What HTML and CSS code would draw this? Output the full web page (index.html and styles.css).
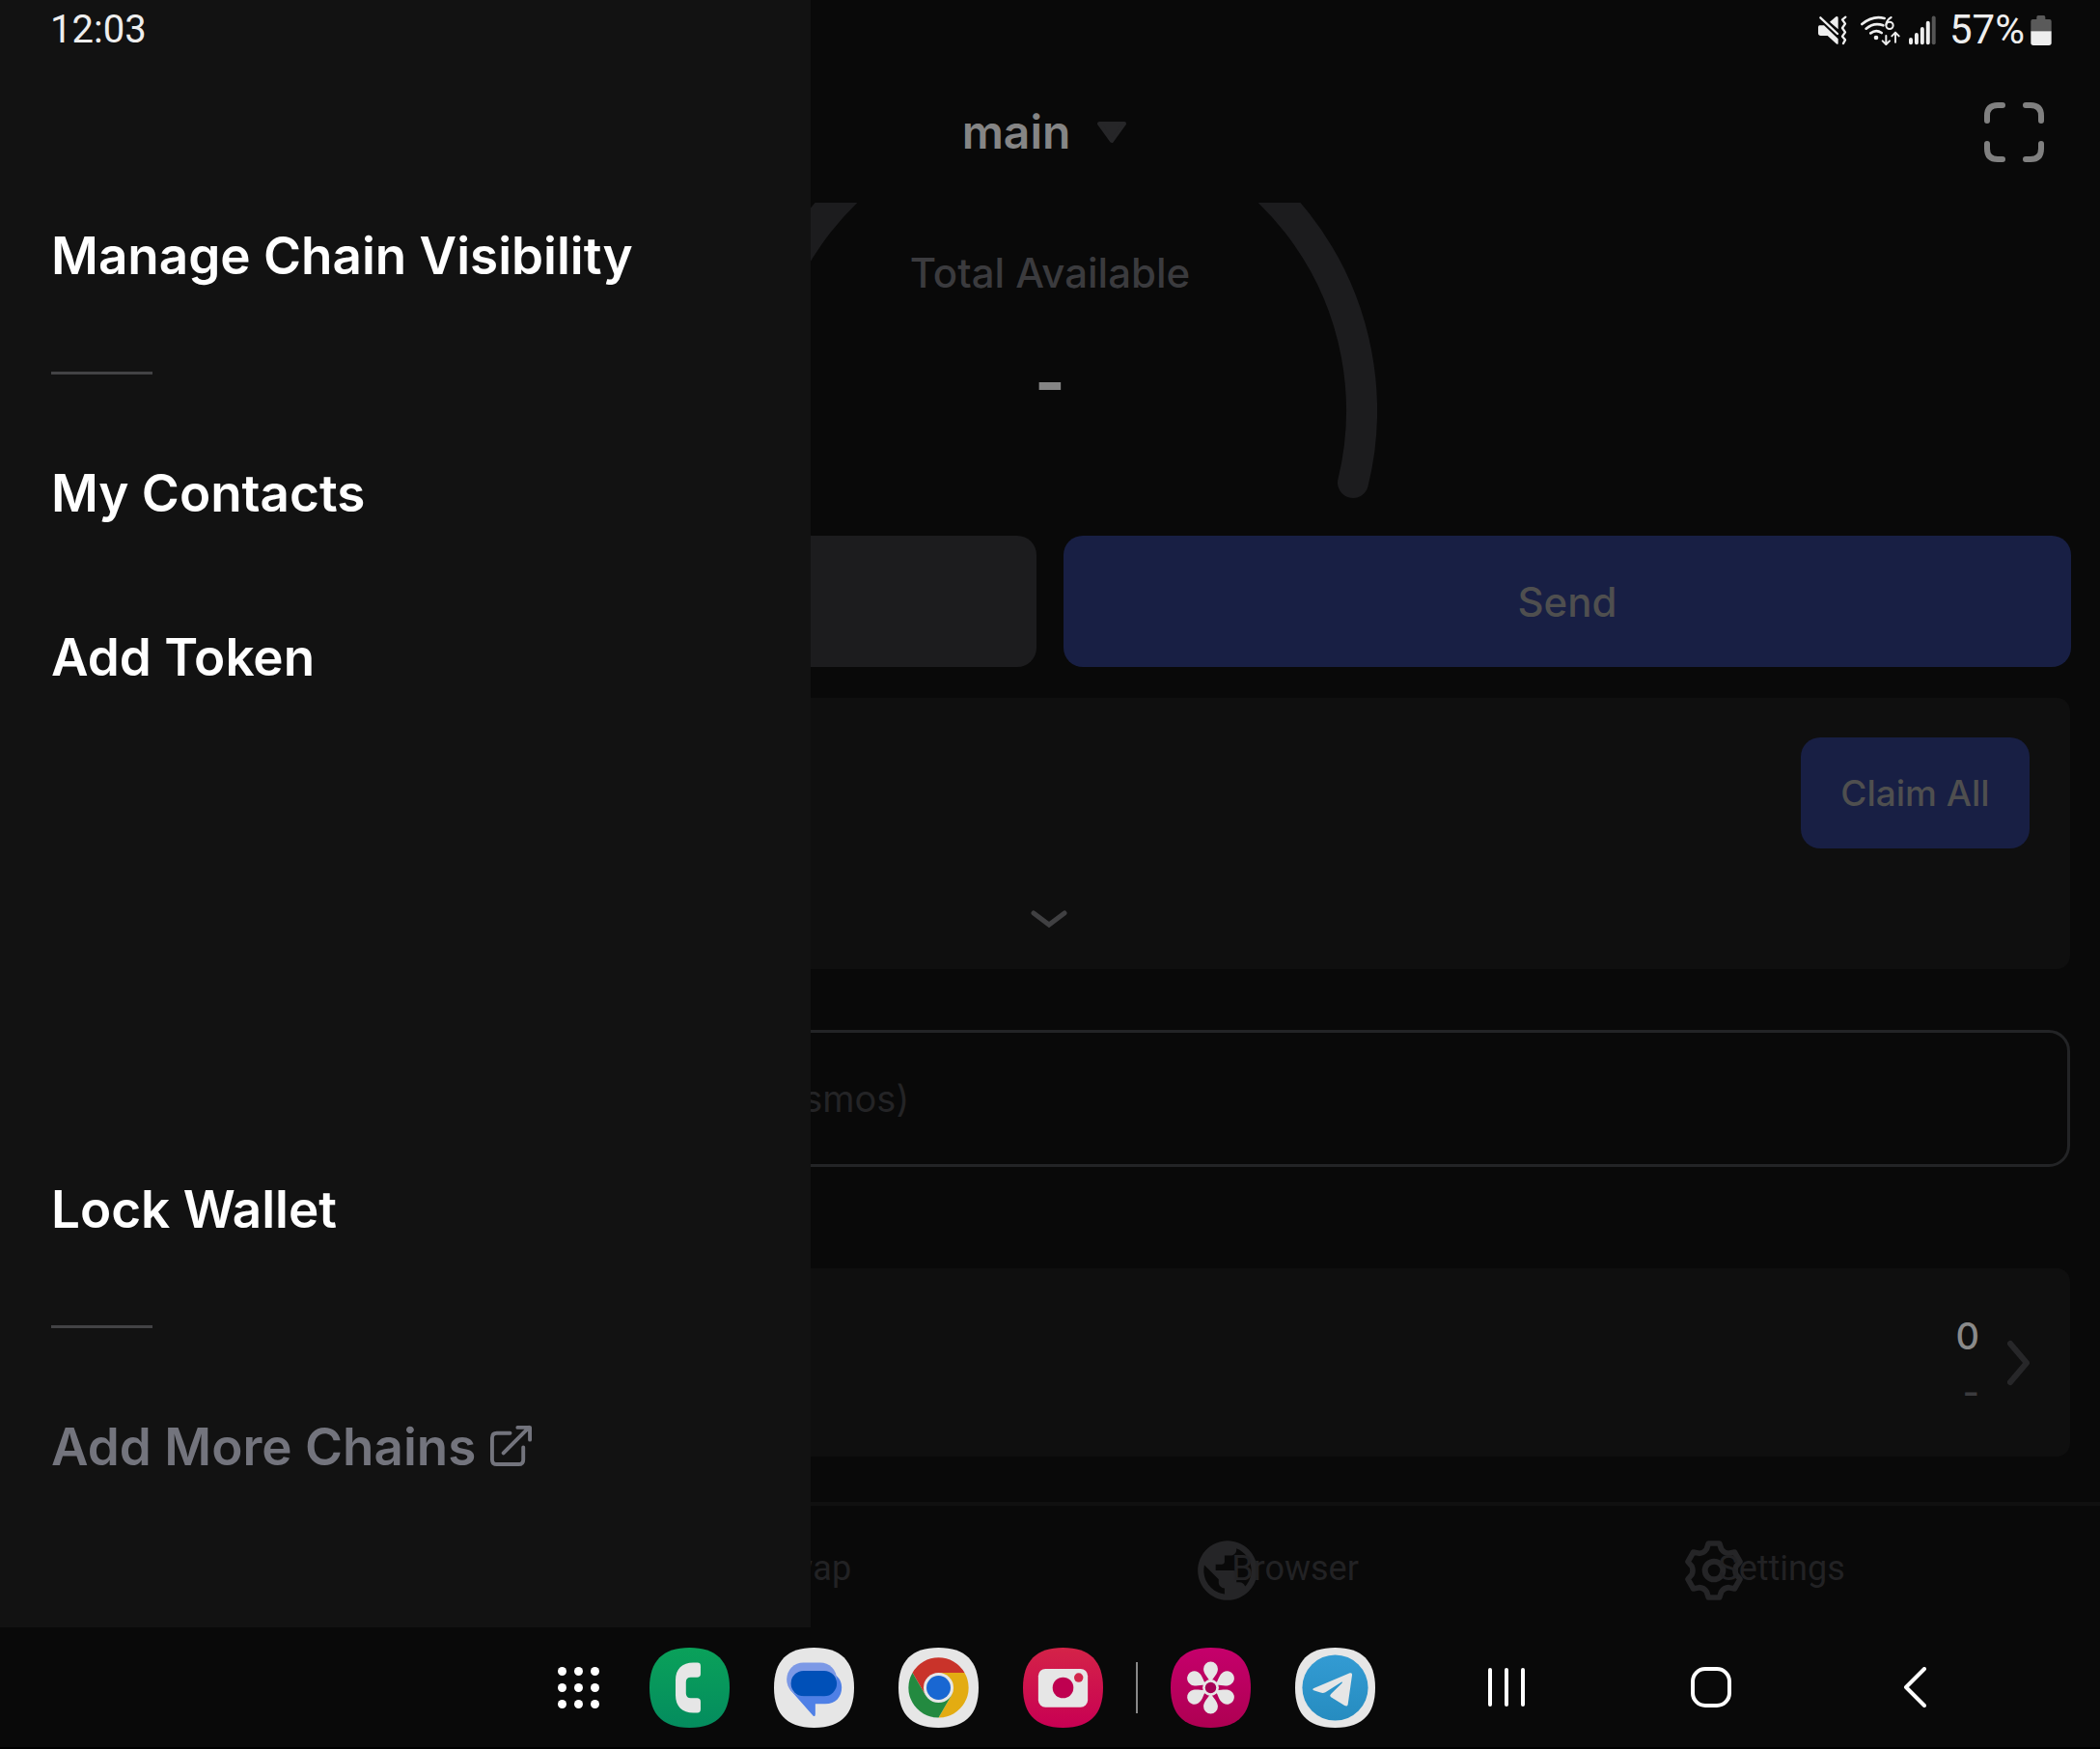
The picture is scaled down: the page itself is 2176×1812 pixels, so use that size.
FILE: index.html
```html
<!DOCTYPE html>
<html lang="en">
<head>
<meta charset="utf-8">
<meta name="viewport" content="width=device-width, initial-scale=1">
<title>Wallet</title>
<link rel="stylesheet" href="styles.css">
</head>
<body>
<div class="screen">
  <div class="stage">
    <main class="home">
      <header class="topbar">
        <button class="account" type="button">
          <span>main</span>
          <svg class="account-caret" viewBox="0 0 52 24" aria-hidden="true"><path d="M12 3H38L25 21Z" fill="#262628" stroke="#262628" stroke-width="4" stroke-linejoin="round"/></svg>
        </button>
        <button class="scan" type="button" aria-label="Scan">
          <svg viewBox="0 0 62 62" aria-hidden="true"><path d="M3 19V14Q3 3 14 3H19M43 3H48Q59 3 59 14V19M59 43V48Q59 59 48 59H43M19 59H14Q3 59 3 48V43" fill="none" stroke="#808080" stroke-width="6" stroke-linecap="round"/></svg>
        </button>
      </header>

      <section class="overview">
        <svg class="gauge" viewBox="0 0 678 345" aria-hidden="true"><path d="M41 290A315 315 0 1 1 653 290" fill="none" stroke="#1c1c1e" stroke-width="32" stroke-linecap="round"/></svg>
        <div class="overview-text">
          <p class="overview-label">Total Available</p>
          <p class="overview-value">-</p>
        </div>
      </section>

      <div class="actions">
        <button class="action action-deposit" type="button" aria-label="Deposit"></button>
        <button class="action action-send" type="button">Send</button>
      </div>

      <section class="card rewards">
        <button class="claim" type="button">Claim All</button>
        <button class="expand" type="button" aria-label="Show more">
          <svg viewBox="0 0 40 22" aria-hidden="true"><path d="M3 5L19 17L35 5" fill="none" stroke="#404042" stroke-width="5" stroke-linecap="round"/></svg>
        </button>
      </section>

      <input class="search" type="search" placeholder="Search (Cosmos)" aria-label="Search">

      <a class="card token" href="#token">
        <span class="token-amounts">
          <span class="token-amount">0</span>
          <span class="token-price">-</span>
        </span>
        <svg class="token-chevron" viewBox="0 0 24 48" aria-hidden="true"><path d="M3 4L20 24L3 44" fill="none" stroke="#272729" stroke-width="6" stroke-linecap="round" stroke-linejoin="round"/></svg>
      </a>

      <nav class="tabs" aria-label="Sections">
        <span class="tab"></span>
        <a class="tab" href="#swap">Swap</a>
        <a class="tab" href="#browser">
          <svg class="tab-icon" viewBox="0 0 24 24" aria-hidden="true"><path fill="#252527" d="M12 2C6.48 2 2 6.48 2 12s4.48 10 10 10 10-4.48 10-10S17.52 2 12 2zm-1 17.93c-3.95-.49-7-3.85-7-7.93 0-.62.08-1.21.21-1.79L9 15v1c0 1.1.9 2 2 2v1.93zm6.9-2.54c-.26-.81-1-1.39-1.9-1.39h-1v-3c0-.55-.45-1-1-1H8v-2h2c.55 0 1-.45 1-1V7h2c1.1 0 2-.9 2-2v-.41c2.93 1.19 5 4.06 5 7.41 0 2.08-.8 3.97-2.1 5.39z"/></svg>
          <span class="tab-label">Browser</span>
        </a>
        <a class="tab" href="#settings">
          <svg class="tab-icon" viewBox="-111 -111 222 222" aria-hidden="true"><g fill="none" stroke="#252527" stroke-width="17" stroke-linejoin="round"><path d="M-17 -84H17L23 -66Q31 -54 46 -53L64 -57L81 -27L69 -13Q63 0 69 13L81 27L64 57L46 53Q31 54 23 66L17 84H-17L-23 66Q-31 54 -46 53L-64 57L-81 27L-69 13Q-63 0 -69 -13L-81 -27L-64 -57L-46 -53Q-31 -54 -23 -66Z"/><circle r="28" stroke-width="18"/></g></svg>
          <span class="tab-label">Settings</span>
        </a>
      </nav>
    </main>

    <aside class="drawer">
      <nav class="menu">
        <a href="#visibility">Manage Chain Visibility</a>
        <hr>
        <a href="#contacts">My Contacts</a>
        <a href="#token-add">Add Token</a>
      </nav>
      <nav class="menu">
        <a href="#lock">Lock Wallet</a>
        <hr>
        <a class="menu-external" href="#more">Add More Chains
          <svg viewBox="0 0 46 46" aria-hidden="true"><path d="M22 10H8Q3 10 3 15V38Q3 43 8 43H31Q36 43 36 38V25M15 31L42 4M30 4H43V17" fill="none" stroke="#73747d" stroke-width="4" stroke-linecap="round" stroke-linejoin="round"/></svg>
        </a>
      </nav>
    </aside>

    <div class="status">
      <time class="clock">12:03</time>
      <div class="indicators">
        <svg class="ind-mute" viewBox="120 45 90 93" aria-hidden="true"><path d="M124 76H138L182 118V131Q182 137 176 133L149 108H128Q120 108 120 100V82Q120 76 124 76ZM156 65L175 49Q182 45 182 53V88Z" fill="#eee"/><path d="M127 52L180 102" stroke="#eee" stroke-width="7" stroke-linecap="round"/><path d="M205 50L195 58L204 71L195 84L204 97L195 110L204 121L198 132" fill="none" stroke="#eee" stroke-width="7" stroke-linecap="round" stroke-linejoin="round"/></svg>
        <svg class="ind-wifi" viewBox="252 45 123 93" aria-hidden="true"><path d="M256 72Q290 44 326 54M269 86Q294 65 322 76M283 100Q300 87 317 99" fill="none" stroke="#eee" stroke-width="8" stroke-linecap="round"/><circle cx="300" cy="114" r="7" fill="#eee"/><path d="M331 108V134M320 124L331 135L342 124M360 128V99M349 109L360 98L371 109" fill="none" stroke="#eee" stroke-width="6" stroke-linecap="round" stroke-linejoin="round"/><circle cx="342" cy="76" r="11" fill="none" stroke="#eee" stroke-width="6"/><path d="M347 51Q333 58 331 74" fill="none" stroke="#eee" stroke-width="6" stroke-linecap="round"/></svg>
        <svg class="ind-signal" viewBox="402 45 85 93" aria-hidden="true"><g stroke="#eee" stroke-width="12" stroke-linecap="round"><path d="M408 120V130M426 105V130M444 87V130M462 68V130"/><path d="M480 52V130" stroke="#555"/></g></svg>
        <span class="percent">57%</span>
        <svg class="ind-battery" viewBox="792 45 64 93" aria-hidden="true"><path d="M815 45H832Q837 45 837 50V57H850Q856 57 856 63V94H792V63Q792 57 798 57H810V50Q810 45 815 45Z" fill="#5a5a5a"/><path d="M792 94H856V130Q856 138 848 138H800Q792 138 792 130Z" fill="#eee"/></svg>
      </div>
    </div>
  </div>

  <footer class="taskbar">
    <div class="dock">
      <button class="apps" type="button" aria-label="All apps">
        <svg viewBox="0 0 43 43" aria-hidden="true"><g fill="#fff"><circle cx="4.500" cy="4.500" r="4.500"/><circle cx="21.500" cy="4.500" r="4.500"/><circle cx="38.500" cy="4.500" r="4.500"/><circle cx="4.500" cy="21.500" r="4.500"/><circle cx="21.500" cy="21.500" r="4.500"/><circle cx="38.500" cy="21.500" r="4.500"/><circle cx="4.500" cy="38.500" r="4.500"/><circle cx="21.500" cy="38.500" r="4.500"/><circle cx="38.500" cy="38.500" r="4.500"/></g></svg>
      </button>
      <button class="app" type="button" aria-label="Phone">
        <svg viewBox="0 0 246 246" aria-hidden="true"><defs><linearGradient id="g-phone" x2="0" y2="1"><stop stop-color="#0aa15a"/><stop offset="1" stop-color="#048c5e"/></linearGradient></defs><path d="M123 0C205 0 246 41 246 123S205 246 123 246S0 205 0 123S41 0 123 0Z" fill="url(#g-phone)"/><path d="M157 56q0-10-10-10h-12C100 46 80 66 80 100v46c0 34 20 54 55 54h12q10 0 10-10v-24q0-11-11-11h-19q-15 0-15-15v-34q0-15 15-15h19q11 0 11-11z" fill="#e6e6e6"/></svg>
      </button>
      <button class="app" type="button" aria-label="Messages">
        <svg viewBox="0 0 246 246" aria-hidden="true"><path d="M123 0C205 0 246 41 246 123S205 246 123 246S0 205 0 123S41 0 123 0Z" fill="#e6e6e6"/><path d="M50 130L120 209Q127 214 127 204V173H157C190 173 208 150 208 122C208 105 200 92 190 85L100 71Z" fill="#4f80e6"/><rect x="39" y="46" width="154" height="103" rx="51" fill="#7c99e6"/><rect x="52" y="71" width="141" height="78" rx="39" fill="#0050b8"/></svg>
      </button>
      <button class="app" type="button" aria-label="Chrome">
        <svg viewBox="0 0 246 246" aria-hidden="true"><path d="M123 0C205 0 246 41 246 123S205 246 123 246S0 205 0 123S41 0 123 0Z" fill="#e6e6e6"/><path d="M43 77A92 92 0 0 1 203 77H123V123L83 146Z" fill="#c9332a"/><path d="M203 77A92 92 0 0 1 123 215L163 146L123 123V77Z" fill="#e3ac12"/><path d="M123 215A92 92 0 0 1 43 77L83 146L123 123L163 146Z" fill="#238a40"/><circle cx="123" cy="123" r="46" fill="#e6e6e6"/><circle cx="123" cy="123" r="37" fill="#1967d2"/></svg>
      </button>
      <button class="app" type="button" aria-label="Camera">
        <svg viewBox="0 0 246 246" aria-hidden="true"><defs><linearGradient id="g-camera" x2="0" y2="1"><stop stop-color="#d42348"/><stop offset="1" stop-color="#c80053"/></linearGradient></defs><path d="M123 0C205 0 246 41 246 123S205 246 123 246S0 205 0 123S41 0 123 0Z" fill="url(#g-camera)"/><rect x="47" y="65" width="152" height="118" rx="22" fill="#e6e6e6"/><circle cx="123" cy="123" r="32" fill="#bf0050"/><circle cx="171" cy="92" r="14" fill="#d3264b"/></svg>
      </button>
      <span class="dock-divider"></span>
      <button class="app" type="button" aria-label="Gallery">
        <svg viewBox="0 0 246 246" aria-hidden="true"><defs><linearGradient id="g-gallery" x2="0" y2="1"><stop stop-color="#c5006b"/><stop offset="1" stop-color="#ae0052"/></linearGradient><path id="petal" d="M0 -16C-8 -32-22 -42-22 -58A22 22 0 0 1 22 -58C22 -42 8 -32 0 -16Z"/></defs><path d="M123 0C205 0 246 41 246 123S205 246 123 246S0 205 0 123S41 0 123 0Z" fill="url(#g-gallery)"/><g transform="translate(123 123)" fill="#e6e6e6"><circle r="25"/><use href="#petal"/><use href="#petal" transform="rotate(60)"/><use href="#petal" transform="rotate(120)"/><use href="#petal" transform="rotate(180)"/><use href="#petal" transform="rotate(240)"/><use href="#petal" transform="rotate(300)"/><circle r="17" fill="#a50055"/></g></svg>
      </button>
      <button class="app" type="button" aria-label="Telegram">
        <svg viewBox="0 0 246 246" aria-hidden="true"><defs><linearGradient id="g-telegram" x2="0" y2="1"><stop stop-color="#339bd3"/><stop offset="1" stop-color="#268cc0"/></linearGradient></defs><path d="M123 0C205 0 246 41 246 123S205 246 123 246S0 205 0 123S41 0 123 0Z" fill="#e6e6e6"/><circle cx="123" cy="123" r="101" fill="url(#g-telegram)"/><path d="M56 125L168 78Q176 76 175 84L162 175Q160 182 152 178L109 151Q105 147 110 142L144 109Q147 104 142 106L93 137Q86 141 78 138L57 131Q51 128 56 125Z" fill="#e6e6e6"/></svg>
      </button>
    </div>
    <div class="system">
      <button type="button" aria-label="Recents"><svg class="sys-recents" viewBox="0 0 38 42" aria-hidden="true"><path d="M2 3V39M19 3V39M36 3V39" stroke="#fff" stroke-width="4" stroke-linecap="round"/></svg></button>
      <button type="button" aria-label="Home"><svg class="sys-home" viewBox="0 0 42 42" aria-hidden="true"><rect x="2" y="2" width="38" height="38" rx="13" fill="none" stroke="#fff" stroke-width="4"/></svg></button>
      <button type="button" aria-label="Back"><svg class="sys-back" viewBox="0 0 24 42" aria-hidden="true"><path d="M22 2L3 21L22 40" fill="none" stroke="#fff" stroke-width="4" stroke-linecap="round" stroke-linejoin="round"/></svg></button>
    </div>
  </footer>
</div>
</body>
</html>
```
FILE: styles.css
```css
* {
  box-sizing: border-box;
}

body {
  margin: 0;
  background: #090909;
  color: #fff;
  font-family: Inter, "Liberation Sans", sans-serif;
}

button {
  padding: 0;
  border: 0;
  background: none;
  color: inherit;
  font: inherit;
}

a {
  color: inherit;
  text-decoration: none;
}

p {
  margin: 0;
}

svg {
  display: block;
}

.screen {
  display: flex;
  flex-direction: column;
  min-height: 100vh;
}

/* The home page, the drawer and the status bar share one grid cell. */
.stage {
  flex: 1;
  display: grid;
}

.home,
.drawer,
.status {
  grid-area: 1 / 1;
  min-width: 0;
}

/* Status bar */
.status {
  z-index: 2;
  align-self: start;
  display: flex;
  justify-content: space-between;
  padding: 0 50px 0 52px;
  color: #eee;
  font: 40px/62px Roboto, sans-serif;
}

.indicators {
  display: flex;
  align-items: center;
}

.ind-mute {
  width: 30px;
  height: 31px;
  margin-right: 14px;
}

.ind-wifi {
  width: 41px;
  height: 31px;
  margin-right: 9px;
}

.ind-signal {
  width: 28px;
  height: 31px;
  margin-right: 14px;
}

.percent {
  margin-right: 6px;
  font-size: 42px;
}

.ind-battery {
  width: 22px;
  height: 31px;
}

/* Home page */
.home {
  display: flex;
  flex-direction: column;
  padding-top: 60px;
}

.topbar {
  display: grid;
  grid-template-columns: 1fr auto 1fr;
  align-items: center;
  height: 150px;
  padding: 4px 58px 0;
}

.account {
  grid-column: 2;
  display: flex;
  align-items: center;
  gap: 18px;
  color: #858585;
  font-size: 48px;
  font-weight: 600;
  line-height: 60px;
}

.account-caret {
  width: 52px;
  height: 24px;
}

.scan {
  justify-self: end;
}

.scan svg {
  width: 62px;
  height: 62px;
}

.overview {
  display: grid;
  justify-items: center;
  height: 345px;
}

.gauge,
.overview-text {
  grid-area: 1 / 1;
}

.gauge {
  width: 678px;
  height: 345px;
}

.overview-text {
  padding-top: 47px;
  text-align: center;
}

.overview-label {
  color: #3b3b3e;
  font-size: 42px;
  font-weight: 500;
  line-height: 52px;
}

.overview-value {
  margin-top: 50px;
  color: #858585;
  font-size: 68px;
  font-weight: 700;
  line-height: 72px;
}

.actions {
  display: grid;
  grid-template-columns: 1fr 1fr;
  gap: 28px;
  padding: 0 30px;
}

.action {
  height: 136px;
  border-radius: 20px;
  color: #4f4f4f;
  font-size: 42px;
  font-weight: 500;
}

.action-deposit {
  background: #1c1c1e;
}

.action-send {
  background: #181f44;
}

.card {
  margin: 0 31px;
  border-radius: 14px;
  background: #0f0f0f;
}

.rewards {
  display: flex;
  flex-direction: column;
  margin-top: 32px;
  padding: 41px 42px;
}

.claim {
  align-self: flex-end;
  width: 237px;
  height: 115px;
  border-radius: 20px;
  background: #181f44;
  color: #4f4f4f;
  font-size: 37px;
  font-weight: 500;
}

.expand {
  align-self: center;
  margin-top: 62px;
}

.expand svg {
  width: 40px;
  height: 22px;
}

.search {
  height: 142px;
  margin: 63px 31px 0;
  padding: 0 40px 0 597px;
  border: 3px solid #232426;
  border-radius: 22px;
  background: none;
  color: #858585;
  font: 400 38px/48px Inter, sans-serif;
}

.search::placeholder {
  color: #242426;
  opacity: 1;
}

.token {
  display: flex;
  align-items: center;
  justify-content: flex-end;
  gap: 29px;
  height: 195px;
  margin-top: 105px;
  padding-right: 41px;
}

.token-amounts {
  display: flex;
  flex-direction: column;
  gap: 10px;
  padding-top: 2px;
  text-align: right;
  font-size: 38px;
  font-weight: 500;
  line-height: 48px;
}

.token-amount {
  color: #8a8a8a;
}

.token-price {
  color: #3b3b3e;
}

.token-chevron {
  width: 24px;
  height: 48px;
}

.tabs {
  display: grid;
  grid-template-columns: repeat(4, 1fr);
  margin-top: auto;
  padding: 4px 78px 0 82px;
  border-top: 4px solid #101010;
  color: #222224;
  font: 36px/122px Roboto, sans-serif;
}

.tab {
  position: relative;
  height: 122px;
  text-align: center;
}

.tab-icon {
  position: absolute;
  top: 26px;
  left: calc(50% - 107px);
  width: 74px;
  height: 74px;
}

.tab-label {
  position: relative;
}

/* Drawer */
.drawer {
  z-index: 1;
  display: flex;
  flex-direction: column;
  justify-content: space-between;
  width: 840px;
  max-width: 90vw;
  padding: 180px 53px 102px;
  background: #121212;
}

.menu {
  display: flex;
  flex-direction: column;
  font-size: 53px;
  font-weight: 600;
  line-height: 170px;
}

.menu hr {
  width: 105px;
  margin: 35px 0 38px;
  border: 0;
  border-top: 3px solid #434345;
}

.menu-external {
  display: flex;
  align-items: center;
  gap: 14px;
  color: #73747d;
}

.menu-external svg {
  width: 45px;
  height: 45px;
  margin-bottom: 4px;
}

/* Android task bar */
.taskbar {
  display: flex;
  align-items: center;
  justify-content: center;
  gap: 117px;
  height: 126px;
  padding-left: 398px;
  border-bottom: 2px solid #000;
}

.dock {
  display: flex;
  align-items: center;
  gap: 46px;
}

.apps {
  margin-right: 6px;
}

.apps svg {
  width: 43px;
  height: 43px;
}

.app svg {
  width: 83px;
  height: 83px;
}

.dock-divider {
  width: 2px;
  height: 53px;
  margin: 0 -12px;
  background: #888;
}

.system {
  display: flex;
  align-items: center;
  gap: 172px;
}

.sys-recents {
  width: 38px;
  height: 42px;
}

.sys-home {
  width: 42px;
  height: 42px;
}

.sys-back {
  width: 24px;
  height: 42px;
  margin-left: 6px;
}
```
